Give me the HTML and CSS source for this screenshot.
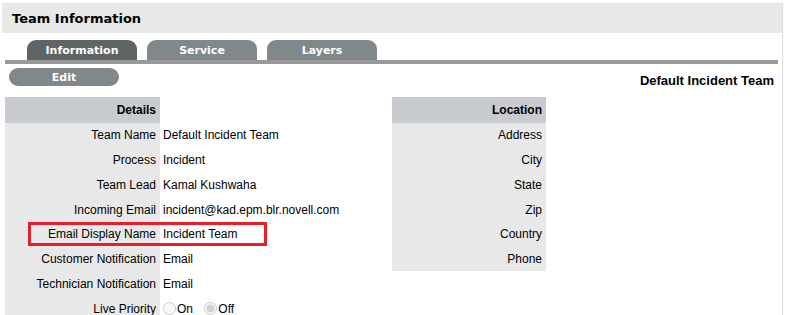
FILE: index.html
```html
<!DOCTYPE html>
<html>
<head>
  <meta charset="UTF-8" />
  <title>Team Information</title>
  <link rel="stylesheet" href="styles.css">
</head>
<body>
  <div class='panel'>
    <div class='panelHeader'>
      <h1>Team Information</h1>
    </div>

    <div class='tabs'>
      <span class='tab active'>Information</span>
      <span class='tab'>Service</span>
      <span class='tab'>Layers</span>
    </div>

    <div class='toolbar'>
      <button id='editTeam'>Edit</button>
      <span class='teamTitle'>Default Incident Team</span>
    </div>

    <div class='sections'>
      <table class='details'>
        <tr class='sectionHead'><th>Details</th><td></td></tr>
        <tr><th>Team Name</th><td>Default Incident Team</td></tr>
        <tr><th>Process</th><td>Incident</td></tr>
        <tr><th>Team Lead</th><td>Kamal Kushwaha</td></tr>
        <tr><th>Incoming Email</th><td>incident@kad.epm.blr.novell.com</td></tr>
        <tr><th>Email Display Name</th><td>Incident Team</td></tr>
        <tr><th>Customer Notification</th><td>Email</td></tr>
        <tr><th>Technician Notification</th><td>Email</td></tr>
        <tr>
          <th>Live Priority</th>
          <td class='radios'>
            <label><input type='radio' name='livePriority' disabled>On</label>
            <label><input type='radio' name='livePriority' checked disabled>Off</label>
          </td>
        </tr>
      </table>

      <table class='location'>
        <tr class='sectionHead'><th>Location</th></tr>
        <tr><th>Address</th></tr>
        <tr><th>City</th></tr>
        <tr><th>State</th></tr>
        <tr><th>Zip</th></tr>
        <tr><th>Country</th></tr>
        <tr><th>Phone</th></tr>
      </table>
    </div>

    <!-- highlight box round the display name row -->
    <div class='highlight'></div>
  </div>
</body>
</html>
```

FILE: styles.css
```css
body {
  margin: 0;
  font-family: "Liberation Sans", Arial, sans-serif;
  font-size: 12px;
  color: #000;
  background-color: #fff;
}

.panel {
  position: relative;
  margin: 3px 0 0 2px;
  width: 780px;
  height: 320px;
  box-shadow: 1px 0 1px rgba(0, 0, 0, 0.12);
}

.panelHeader {
  height: 30px;
  background-color: #e8e8e8;
  display: flex;
  align-items: center;
  padding-left: 10px;
}

.panelHeader h1 {
  margin: 0;
  font-family: "DejaVu Sans", Verdana, sans-serif;
  font-size: 13px;
  font-weight: bold;
  color: #000;
}

.tabs {
  margin: 7px 4px 0 3px;
  padding-left: 22px;
  display: flex;
  gap: 10px;
  border-bottom: 4px solid #999;
}

.tab {
  width: 110px;
  height: 20px;
  line-height: 21px;
  text-align: center;
  background-color: #80888b;
  color: #fff;
  font-family: "DejaVu Sans", Verdana, sans-serif;
  font-size: 11px;
  font-weight: bold;
  border-radius: 9px 9px 0 0;
}

.tab.active {
  background-color: #5f6467;
}

.toolbar {
  height: 33px;
  padding: 4px 8px 0 7px;
  box-sizing: border-box;
  display: flex;
  align-items: flex-start;
}

#editTeam {
  width: 110px;
  height: 18px;
  padding: 0;
  border: none;
  border-radius: 9px;
  background-color: #80888b;
  color: #fff;
  font-family: "DejaVu Sans", Verdana, sans-serif;
  font-size: 11px;
  font-weight: bold;
}

.teamTitle {
  margin-left: auto;
  margin-top: 5px;
  font-size: 13px;
  font-weight: bold;
  color: #000;
}

.sections {
  display: flex;
  align-items: flex-start;
  padding-left: 3px;
}

table {
  border-collapse: collapse;
}

th {
  font-weight: normal;
  text-align: right;
  padding: 0 4px 0 0;
  background-color: #e8e8e8;
  white-space: nowrap;
}

td {
  padding: 0 0 0 3px;
  white-space: nowrap;
}

tr {
  height: 24.75px;
}

tr.sectionHead {
  height: 26px;
}

tr.sectionHead th {
  background-color: #c8cbcf;
  font-weight: bold;
}

.details {
  width: 387px;
}

.details th {
  width: 151px;
}

.location th {
  width: 150px;
}

.location tr:last-child {
  height: 24px;
}

.radios label {
  margin-right: 8px;
}

.radios input {
  margin: 0 1px 0 0;
  width: 13px;
  height: 13px;
  vertical-align: -2px;
}

.highlight {
  position: absolute;
  left: 26px;
  top: 219px;
  width: 233px;
  height: 18px;
  border: 3px solid #e3202c;
}
```
